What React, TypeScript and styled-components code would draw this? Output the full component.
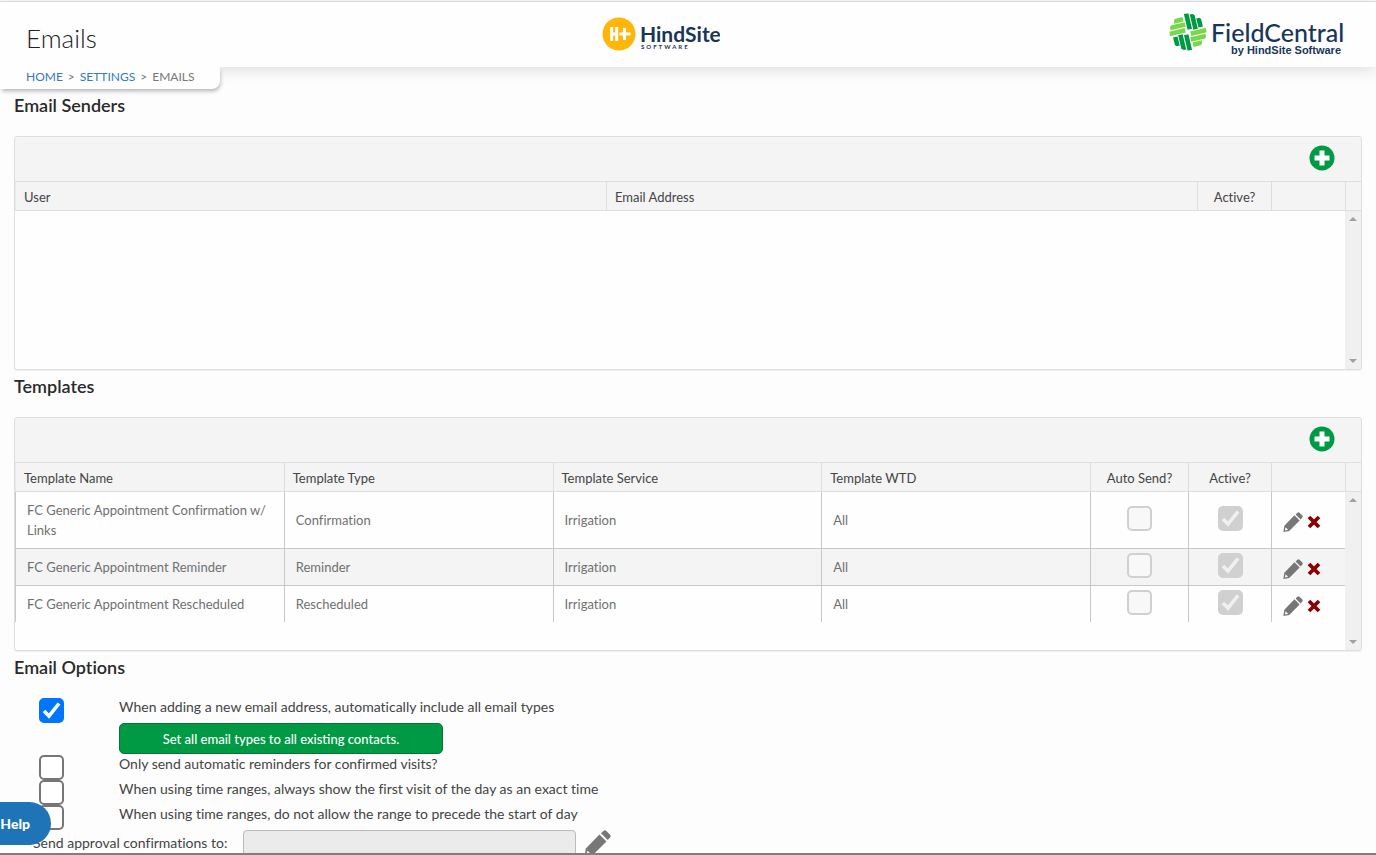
import React, { ReactNode } from 'react';
import styled, { createGlobalStyle } from 'styled-components';

const navy = '#17365a';
const green = '#009a44';
const lime = '#78d64b';

const GlobalStyle = createGlobalStyle`
  *, *::before, *::after { box-sizing: border-box; }
  body {
    margin: 0;
    background: #fdfdfd;
    color: #444;
    font-family: Lato, "Open Sans", sans-serif;
    font-size: 14px;
    line-height: 20px;
    font-variant-ligatures: no-common-ligatures;
  }
`;

const Page = styled.div`
  height: 100vh;
  padding-top: 1px;
  overflow: hidden;
`;

const Header = styled.header`
  display: grid;
  grid-template-columns: 12fr auto 13fr;
  align-items: center;
  height: 66px;
  padding: 0 32px 0 26px;
  border-top: 1px solid #dcdcdc;
  background: #fefefe;
  box-shadow: 0 2px 16px rgba(0, 0, 0, 0.14);
`;

const Title = styled.h1`
  margin: 6px 0 0;
  font-size: 26px;
  font-weight: 300;
  line-height: 32px;
  color: #222;
`;

const LogoEnd = styled.div`
  display: flex;
  justify-content: flex-end;
`;

const Breadcrumb = styled.nav`
  position: relative;
  display: flex;
  gap: 5px;
  width: fit-content;
  height: 22px;
  padding: 0 26px;
  border-radius: 0 0 8px 0;
  background: #fefefe;
  box-shadow: 1px 3px 4px -1px rgba(0, 0, 0, 0.3);
  font-size: 12px;
  color: #777;
`;

const Crumb = styled.a`
  color: #337ab7;
  text-decoration: none;
`;

const Main = styled.main`
  padding: 0 14px;
`;

const Section = styled.section`
  display: flex;
  flex-direction: column;
`;

const Heading = styled.h2`
  margin: 0;
  padding: 5px 0 20px;
  font-size: 18px;
  font-weight: 600;
  line-height: 22px;
  color: #2a2a2a;
`;

const Panel = styled.div`
  height: 234px;
  border: 1px solid #dedede;
  border-radius: 3px;
  box-shadow: 0 1px 1px rgba(0, 0, 0, 0.06);
  background: #fefefe;
  overflow: hidden;
`;

const Toolbar = styled.div`
  display: flex;
  align-items: center;
  justify-content: flex-end;
  height: 44px;
  padding: 0 26px 2px 0;
  background: #f4f4f4;
`;

const IconButton = styled.button`
  display: inline-flex;
  padding: 0;
  border: 0;
  background: none;
  cursor: pointer;
`;

const GridArea = styled.div`
  display: flex;
  align-items: stretch;
  height: 188px;
`;

const TableArea = styled.div`
  flex: 1;
  min-width: 0;
`;

const Table = styled.table`
  width: 100%;
  table-layout: fixed;
  border-spacing: 0;
`;

const HeadCell = styled.th<{ $center?: boolean }>`
  height: 30px;
  padding: 2px 8px 0;
  border: solid #dedede;
  border-width: 1px 0 1px 1px;
  background: #f4f4f4;
  font-size: 13px;
  font-weight: 400;
  text-align: ${p => (p.$center ? 'center' : 'left')};
  color: #444;
  &:first-child { border-left-color: #e8e8e8; }
`;

const BodyRow = styled.tr`
  &:nth-child(even) { background: #f4f4f4; }
`;

const Cell = styled.td`
  height: 37px;
  padding: 8px 11px;
  border-left: 1px solid #c8c8c8;
  border-bottom: 1px solid #c8c8c8;
  font-size: 13px;
  color: #707070;
  ${BodyRow}:last-child & {
    height: 36px;
    border-bottom: 0;
  }
`;

const CheckCell = styled(Cell)`
  padding: 0 0 3px;
  text-align: center;
`;

const ActionCell = styled(Cell)`
  padding: 4px 0 0 11px;
`;

const Actions = styled.div`
  display: flex;
  align-items: center;
  gap: 4px;
`;

const ScrollColumn = styled.div`
  display: flex;
  flex-direction: column;
  width: 16px;
`;

const ScrollHead = styled.div`
  height: 30px;
  border: solid #dedede;
  border-width: 1px 0 1px 1px;
  background: #f4f4f4;
`;

const ScrollTrack = styled.div`
  display: flex;
  flex: 1;
  flex-direction: column;
  align-items: center;
  justify-content: space-between;
  padding: 6px 0;
  background: #f0f0f0;
`;

const CheckWrap = styled.span`
  display: inline-grid;
  width: 25px;
  height: 25px;
  vertical-align: top;
  & > * { grid-area: 1 / 1; }
  & > svg { pointer-events: none; z-index: 1; }
`;

const CheckInput = styled.input`
  appearance: none;
  width: 100%;
  height: 100%;
  margin: 0;
  border: 2px solid #767676;
  border-radius: 5px;
  background: #fff;
  &:checked { border-color: #0075ff; background: #0075ff; }
  &:disabled { border-color: #d0d0d0; background: #f8f8f8; }
  &:disabled:checked { border-color: #d0d0d0; background: #d0d0d0; }
`;

const OptionList = styled.div`
  display: grid;
  grid-template-columns: 80px 1fr;
  padding-left: 25px;
`;

const OptionCheck = styled.div`
  height: 25px;
`;

const OptionLabel = styled.label`
  height: 25px;
  line-height: 18px;
`;

const SetAll = styled.button`
  grid-column: 2;
  width: 324px;
  height: 31px;
  margin-bottom: 1px;
  border: 1px solid #007a33;
  border-radius: 5px;
  background: ${green};
  color: #fff;
  font: 500 13px/20px Lato, sans-serif;
`;

const Approval = styled.div`
  display: flex;
  align-items: flex-start;
  gap: 8px;
  padding-left: 19px;
`;

const ApprovalLabel = styled.label`
  width: 202px;
  padding-top: 3px;
`;

const ApprovalInput = styled.input`
  width: 333px;
  height: 32px;
  border: 1px solid #bbb;
  border-radius: 4px;
  background: #ebebeb;
`;

const Help = styled.button`
  position: fixed;
  left: 0;
  bottom: 10px;
  display: flex;
  align-items: center;
  justify-content: flex-end;
  width: 51px;
  height: 43px;
  padding: 0 21px 0 0;
  border: 0;
  border-radius: 0 22px 22px 0;
  background: #1f73b7;
  color: #fff;
  font: 900 14px/20px Lato, sans-serif;
`;

const BottomEdge = styled.div`
  position: fixed;
  inset: auto 0 0;
  height: 2px;
  background: #808080;
`;

function HindSiteLogo() {
  return (
    <svg width="118" height="38" viewBox="0 0 118 38" role="img" aria-label="HindSite Software">
      <circle cx="17" cy="18" r="16.500" fill="#ffb60a" />
      <path d="M9.700 11v14M9.700 18h5M14.700 11v14M22.500 12v12M17.500 18h11" stroke="#fff" strokeWidth="3" fill="none" />
      <text x="38" y="26" fontFamily="Lato" fontWeight="700" fontSize="21" fill={navy}>HindSite</text>
      <text x="39" y="33" fontFamily="Lato" fontWeight="700" fontSize="6" letterSpacing="2" fill={navy}>SOFTWARE</text>
    </svg>
  );
}

const weaveTurns = [
  { angle: 0, color: green },
  { angle: 90, color: lime },
  { angle: 180, color: green },
  { angle: 270, color: lime },
];

function FieldCentralLogo() {
  return (
    <svg width="176" height="46" viewBox="0 0 176 46" role="img" aria-label="FieldCentral by HindSite Software">
      <clipPath id="weave"><circle cx="20" cy="20" r="18.500" /></clipPath>
      <g clipPath="url(#weave)">
        {weaveTurns.map(t => (
          <path
            key={t.angle}
            d="M-2 -19L1.800 -2.800M4 -18L7.600 -2.800M10.500 -14L12.700 -5"
            transform={`translate(20 20) rotate(${t.angle})`}
            stroke={t.color}
            strokeWidth="4.600"
          />
        ))}
      </g>
      <text x="43" y="30" fontFamily="Lato" fontSize="25" fontWeight="500" fill={navy}>FieldCentral</text>
      <text x="63" y="42" fontFamily="Liberation Sans" fontWeight="700" fontSize="11" fill={navy}>by HindSite Software</text>
    </svg>
  );
}

function PlusIcon() {
  return (
    <svg width="26" height="26" viewBox="0 0 26 26" aria-hidden="true">
      <circle cx="13" cy="13" r="12.500" fill={green} />
      <path d="M13 5.500v15M5.500 13h15" stroke="#fff" strokeWidth="5" />
    </svg>
  );
}

function PencilIcon({ size }: { size: number }) {
  return (
    <svg width={size} height={size} viewBox="0 0 18 18" aria-hidden="true">
      <path fill="#777" fillRule="evenodd" d="M10.300 3 15 7.700 5.600 17 0.300 18 1.200 12.300ZM2.300 13.700 1.700 16.600 4.600 16ZM11.300 2.200 13 .600Q14 -.200 14.900.600L17.400 3.100Q18.200 4 17.400 5L15.800 6.700Z" />
    </svg>
  );
}

function CrossIcon() {
  return (
    <svg width="14" height="14" viewBox="0 0 14 14" aria-hidden="true">
      <path d="M2 2l10 10M12 2L2 12" stroke="#8b0000" strokeWidth="3.800" />
    </svg>
  );
}

function Arrow({ down }: { down?: boolean }) {
  return (
    <svg width="8" height="4" viewBox="0 0 8 4" aria-hidden="true">
      <path d={down ? 'M0 0h8L4 4z' : 'M0 4h8L4 0z'} fill="#a0a0a0" />
    </svg>
  );
}

function Check({ id, label, checked, disabled }: { id?: string; label?: string; checked?: boolean; disabled?: boolean }) {
  return (
    <CheckWrap>
      <CheckInput type="checkbox" id={id} aria-label={label} defaultChecked={checked} disabled={disabled} />
      {checked && (
        <svg width="25" height="25" viewBox="0 0 25 25" aria-hidden="true">
          <path d="M5 13l5 5L20 5.500" fill="none" stroke={disabled ? '#f0f0f0' : '#fff'} strokeWidth="3.600" />
        </svg>
      )}
    </CheckWrap>
  );
}

interface Column { label: string; width?: number; center?: boolean }

function DataPanel({ name, columns, children }: { name: string; columns: Column[]; children?: ReactNode }) {
  return (
    <Panel>
      <Toolbar>
        <IconButton aria-label={`Add to ${name}`}><PlusIcon /></IconButton>
      </Toolbar>
      <GridArea>
        <TableArea>
          <Table aria-label={name}>
            <colgroup>
              {columns.map((c, i) => <col key={i} width={c.width} />)}
            </colgroup>
            <thead>
              <tr>{columns.map((c, i) => <HeadCell key={i} $center={c.center}>{c.label}</HeadCell>)}</tr>
            </thead>
            <tbody>{children}</tbody>
          </Table>
        </TableArea>
        <ScrollColumn>
          <ScrollHead />
          <ScrollTrack><Arrow /><Arrow down /></ScrollTrack>
        </ScrollColumn>
      </GridArea>
    </Panel>
  );
}

const senderColumns: Column[] = [
  { label: 'User' },
  { label: 'Email Address' },
  { label: 'Active?', width: 74, center: true },
  { label: '', width: 74 },
];

const templateColumns: Column[] = [
  { label: 'Template Name' },
  { label: 'Template Type' },
  { label: 'Template Service' },
  { label: 'Template WTD' },
  { label: 'Auto Send?', width: 98, center: true },
  { label: 'Active?', width: 83, center: true },
  { label: '', width: 74 },
];

const templates = [
  { name: 'FC Generic Appointment Confirmation w/ Links', type: 'Confirmation' },
  { name: 'FC Generic Appointment Reminder', type: 'Reminder' },
  { name: 'FC Generic Appointment Rescheduled', type: 'Rescheduled' },
];

const options = [
  { id: 'confirmed', label: 'Only send automatic reminders for confirmed visits?' },
  { id: 'exact', label: 'When using time ranges, always show the first visit of the day as an exact time' },
  { id: 'precede', label: 'When using time ranges, do not allow the range to precede the start of day' },
];

export default function App() {
  return (
    <Page>
      <GlobalStyle />
      <Header>
        <Title>Emails</Title>
        <HindSiteLogo />
        <LogoEnd><FieldCentralLogo /></LogoEnd>
      </Header>
      <Breadcrumb aria-label="Breadcrumb">
        <Crumb href="#home">HOME</Crumb>&gt;
        <Crumb href="#settings">SETTINGS</Crumb>&gt;
        <span>EMAILS</span>
      </Breadcrumb>
      <Main>
        <Section>
          <Heading>Email Senders</Heading>
          <DataPanel name="Email Senders" columns={senderColumns} />
        </Section>
        <Section>
          <Heading>Templates</Heading>
          <DataPanel name="Templates" columns={templateColumns}>
            {templates.map(t => (
              <BodyRow key={t.name}>
                <Cell>{t.name}</Cell>
                <Cell>{t.type}</Cell>
                <Cell>Irrigation</Cell>
                <Cell>All</Cell>
                <CheckCell><Check label="Auto Send" disabled /></CheckCell>
                <CheckCell><Check label="Active" checked disabled /></CheckCell>
                <ActionCell>
                  <Actions>
                    <IconButton aria-label="Edit"><PencilIcon size={20} /></IconButton>
                    <IconButton aria-label="Delete"><CrossIcon /></IconButton>
                  </Actions>
                </ActionCell>
              </BodyRow>
            ))}
          </DataPanel>
        </Section>
        <Section>
          <Heading>Email Options</Heading>
          <OptionList>
            <OptionCheck><Check id="include" checked /></OptionCheck>
            <OptionLabel htmlFor="include">When adding a new email address, automatically include all email types</OptionLabel>
            <SetAll>Set all email types to all existing contacts.</SetAll>
            {options.map(o => (
              <React.Fragment key={o.id}>
                <OptionCheck><Check id={o.id} /></OptionCheck>
                <OptionLabel htmlFor={o.id}>{o.label}</OptionLabel>
              </React.Fragment>
            ))}
          </OptionList>
          <Approval>
            <ApprovalLabel htmlFor="approval">Send approval confirmations to:</ApprovalLabel>
            <ApprovalInput id="approval" readOnly />
            <IconButton aria-label="Edit approval recipients"><PencilIcon size={27} /></IconButton>
          </Approval>
        </Section>
      </Main>
      <Help>Help</Help>
      <BottomEdge />
    </Page>
  );
}
